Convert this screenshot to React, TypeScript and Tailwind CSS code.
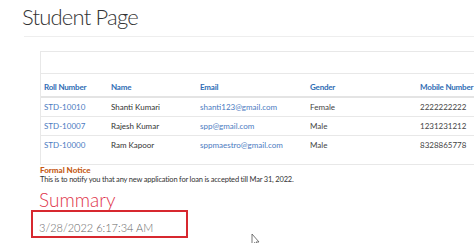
const students = [
  { roll: "STD-10010", name: "Shanti Kumari", email: "shanti123@gmail.com", gender: "Female", mobile: "2222222222" },
  { roll: "STD-10007", name: "Rajesh Kumar", email: "spp@gmail.com", gender: "Male", mobile: "1231231212" },
  { roll: "STD-10000", name: "Ram Kapoor", email: "sppmaestro@gmail.com", gender: "Male", mobile: "8328865778" },
]

function Cursor() {
  return (
    <svg width="9" height="14" viewBox="0 0 9 14" className="absolute left-[251px] top-[233px]">
      <path d="M1 1 L1 12 L3.5 9.5 L5.5 13.5 L7 12.8 L5 9 L8 9 Z" fill="#fff" stroke="#555" strokeWidth="0.8" />
    </svg>
  )
}

export default function App() {
  return (
    <div className="relative w-[474px] h-[243px] overflow-hidden bg-white font-['Lato',sans-serif]">
      <div className="pl-[22px] pt-[3px]">
        <h1 className="text-[22px] leading-[28px] font-light text-[#333] tracking-[-0.8px]">Student Page</h1>
      </div>
      <div className="ml-[24px] mt-[5px] border-t border-[#eee]"></div>

      <div className="ml-[40px] mt-[14px] w-[460px] border border-[#e8e8e8] pb-[9px] text-[8px]">
        <div className="h-[22px] border-b border-[#e8e8e8]"></div>
        <table className="w-full border-collapse table-fixed">
          <colgroup>
            <col className="w-[67px]" />
            <col className="w-[89px]" />
            <col className="w-[110px]" />
            <col className="w-[110px]" />
            <col />
          </colgroup>
          <thead>
            <tr className="h-[23px] border-b-2 border-[#e4e4e4]">
              {["Roll Number", "Name", "Email", "Gender", "Mobile Number"].map((h) => (
                <th key={h} className="text-left font-bold text-[#2f6db5] pl-[3px] pt-[4px] whitespace-nowrap tracking-[-0.2px]">{h}</th>
              ))}
            </tr>
          </thead>
          <tbody>
            {students.map((s, i) => (
              <tr key={s.roll} className={i < students.length - 1 ? "h-[19px] border-b border-[#e8e8e8]" : "h-[20px]"}>
                <td className="pl-[3px] text-[#4b7bbf]">{s.roll}</td>
                <td className="pl-[3px] text-[#333]">{s.name}</td>
                <td className="pl-[3px] text-[#4b7bbf]">{s.email}</td>
                <td className="pl-[3px] text-[#444]">{s.gender}</td>
                <td className="pl-[3px] text-[#444]">{s.mobile}</td>
              </tr>
            ))}
          </tbody>
        </table>
      </div>

      <div className="ml-[40px] leading-[10px]">
        <div className="text-[8px] font-black text-[#c55a14]">Formal Notice</div>
        <div className="text-[7.5px] tracking-[-0.2px] text-[#333]">This is to notify you that any new application for loan is accepted till Mar 31, 2022.</div>
      </div>

      <div className="ml-[39px] mt-[5px] text-[19px] leading-[20px] font-light text-[#e0344b]">Summary</div>
      <div className="ml-[31px] w-[157px] h-[28px] border-2 border-[#d7282f] flex items-end pl-[6px] pb-[1px]">
        <span className="text-[11px] leading-[14px] font-light text-[#666]">3/28/2022 6:17:34 AM</span>
      </div>

      <Cursor />
    </div>
  )
}
